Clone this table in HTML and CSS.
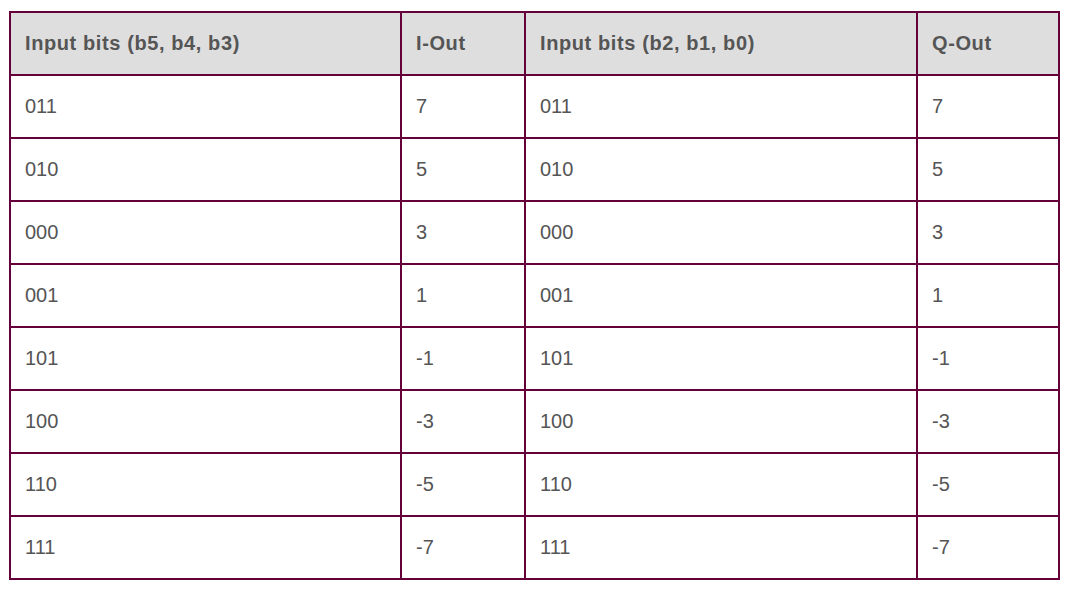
FILE: index.html
```html
<!DOCTYPE html>
<html>
<head>
<meta charset="utf-8">
<link rel="stylesheet" href="styles.css">
</head>
<body>
<div class="wrap">
  <div class="tbl">
    <div class="cell head">Input bits (b5, b4, b3)</div>
    <div class="cell head">I-Out</div>
    <div class="cell head">Input bits (b2, b1, b0)</div>
    <div class="cell head">Q-Out</div>

    <div class="cell">011</div><div class="cell">7</div><div class="cell">011</div><div class="cell">7</div>
    <div class="cell">010</div><div class="cell">5</div><div class="cell">010</div><div class="cell">5</div>
    <div class="cell">000</div><div class="cell">3</div><div class="cell">000</div><div class="cell">3</div>
    <div class="cell">001</div><div class="cell">1</div><div class="cell">001</div><div class="cell">1</div>
    <div class="cell">101</div><div class="cell">-1</div><div class="cell">101</div><div class="cell">-1</div>
    <div class="cell">100</div><div class="cell">-3</div><div class="cell">100</div><div class="cell">-3</div>
    <div class="cell">110</div><div class="cell">-5</div><div class="cell">110</div><div class="cell">-5</div>
    <div class="cell">111</div><div class="cell">-7</div><div class="cell">111</div><div class="cell">-7</div>
  </div>
</div>
</body>
</html>
```

FILE: styles.css
```css
html, body {
  margin: 0;
  padding: 0;
  background: #fff;
}
.wrap {
  padding: 11px 0 0 9px;
}
.tbl {
  display: grid;
  grid-template-columns: 391px 124px 392px 142px;
  grid-auto-rows: 63px;
  width: 1051px;
  box-sizing: border-box;
  border-top: 2px solid #66003a;
  border-left: 2px solid #66003a;
  font-family: "Liberation Sans", Arial, sans-serif;
  font-size: 20px;
  color: #555;
}
.cell {
  box-sizing: border-box;
  border-right: 2px solid #66003a;
  border-bottom: 2px solid #66003a;
  padding: 0 14px;
  display: flex;
  align-items: center;
}
.head {
  background: #dedede;
  font-weight: bold;
  letter-spacing: 0.6px;
}
```
